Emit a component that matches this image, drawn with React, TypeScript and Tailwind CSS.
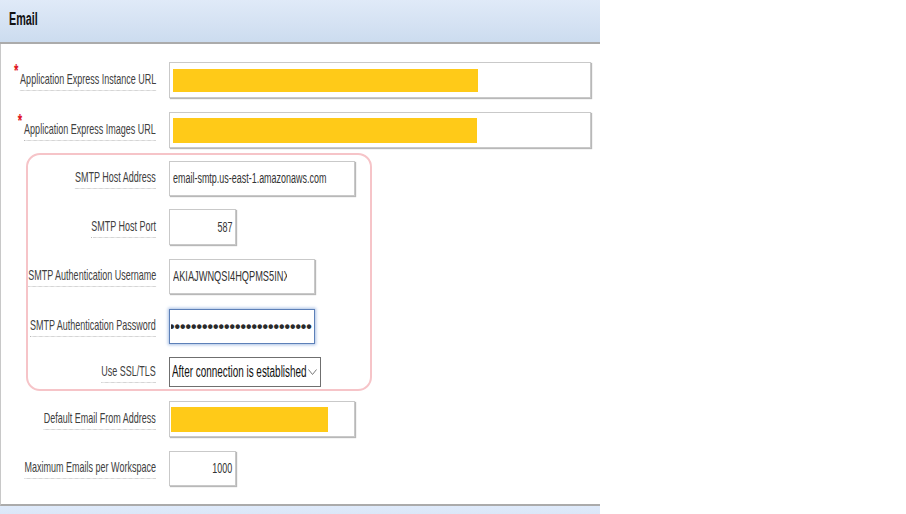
import React from "react";

const font = { fontFamily: '"Liberation Sans", Arial, sans-serif' };

function Label({ text, required }: { text: string; required?: boolean }) {
  return (
    <div className="flex justify-end shrink-0 w-full">
      <span className="inline-flex shrink-0 origin-right scale-x-[0.6] whitespace-nowrap items-start">
        {required && <span className="text-[#e0141e] text-[19px] font-bold leading-[14px] mr-[3px] -mt-[6px]">*</span>}
        <span className="text-[15px] leading-[18px] text-[#404040] border-b border-dotted border-[#b9b9b9] pb-[2px]">
          {text}
        </span>
      </span>
    </div>
  );
}

function Row({
  label,
  required,
  labelW,
  className,
  children,
}: {
  label: string;
  required?: boolean;
  labelW: string;
  className?: string;
  children: React.ReactNode;
}) {
  return (
    <div className={`flex items-center gap-[13px] ${className ?? ""}`}>
      <div className={`${labelW} shrink-0 flex`}>
        <Label text={label} required={required} />
      </div>
      {children}
    </div>
  );
}

function Box({
  w,
  h = "h-[36px]",
  focused,
  children,
}: {
  w: string;
  h?: string;
  focused?: boolean;
  children?: React.ReactNode;
}) {
  return (
    <div
      className={`${w} ${h} shrink-0 bg-white flex items-center overflow-hidden ${
        focused
          ? "border border-[#5d80b8] shadow-[0_0_3px_1px_#a9c0e4]"
          : "border border-[#c9c9c9] shadow-[1px_1px_1px_rgba(0,0,0,0.28)]"
      }`}
    >
      {children}
    </div>
  );
}

function Val({ text, right }: { text: string; right?: boolean }) {
  return (
    <div className={`flex w-full px-[3px] ${right ? "justify-end" : "justify-start"}`}>
      <span
        className={`shrink-0 whitespace-nowrap text-[14px] text-[#333] scale-x-[0.64] ${
          right ? "origin-right" : "origin-left"
        }`}
      >
        {text}
      </span>
    </div>
  );
}

export default function App() {
  return (
    <div className="w-[906px] h-[514px] overflow-hidden bg-white" style={font}>
      <div className="w-[600px]">
        <div className="h-[44px] bg-gradient-to-b from-[#e0eaf8] to-[#ccdcef] border-b-2 border-[#ababab] flex items-start pl-[9px] pt-[6px]">
          <span className="text-[18px] font-bold text-[#111] origin-left scale-x-[0.6] whitespace-nowrap">Email</span>
        </div>

        <div className="border-l border-[#c8c8c8] border-b-2 border-b-[#ababab] pt-[18px] pb-[18px] flex flex-col">
          <Row label="Application Express Instance URL" required labelW="w-[155px]">
            <Box w="w-[422px]">
              <div className="ml-[3px] w-[305px] h-[23px] bg-[#ffca18]" />
            </Box>
          </Row>
          <Row label="Application Express Images URL" required labelW="w-[155px]" className="mt-[14px]">
            <Box w="w-[422px]">
              <div className="ml-[3px] w-[304px] h-[25px] bg-[#ffca18]" />
            </Box>
          </Row>

          <div className="ml-[25px] mt-[5px] w-[346px] border-2 border-[#f6c4c8] rounded-[14px] pt-[6px] pb-[2px] flex flex-col">
            <Row label="SMTP Host Address" labelW="w-[128px]">
              <Box w="w-[186px]" h="h-[35px]">
                <Val text="email-smtp.us-east-1.amazonaws.com" />
              </Box>
            </Row>
            <Row label="SMTP Host Port" labelW="w-[128px]" className="mt-[13px]">
              <Box w="w-[67px]">
                <Val text="587" right />
              </Box>
            </Row>
            <Row label="SMTP Authentication Username" labelW="w-[128px]" className="mt-[14px]">
              <Box w="w-[146px]" h="h-[35px]">
                <div className="ml-[3px] w-[114px] overflow-hidden flex">
                  <span className="shrink-0 whitespace-nowrap text-[14px] text-[#333] scale-x-[0.66] origin-left">
                    AKIAJWNQSI4HQPMS5INX
                  </span>
                </div>
              </Box>
            </Row>
            <Row label="SMTP Authentication Password" labelW="w-[128px]" className="mt-[15px]">
              <Box w="w-[146px]" h="h-[35px]" focused>
                <div className="ml-[1px] w-[141px] overflow-hidden flex justify-end">
                  <span className="shrink-0 whitespace-nowrap text-[16px] font-bold leading-none text-[#2a2a2a] scale-x-[0.98] origin-right">
                    {"•".repeat(28)}
                  </span>
                </div>
              </Box>
            </Row>
            <Row label="Use SSL/TLS" labelW="w-[128px]" className="mt-[13px]">
              <div className="w-[152px] h-[30px] shrink-0 bg-white border border-[#6f6f6f] flex items-center pr-[3px]">
                <div className="flex-1 min-w-0 overflow-hidden flex">
                  <span className="shrink-0 whitespace-nowrap text-[16px] text-[#111] scale-x-[0.62] origin-left ml-[2px]">
                    After connection is established
                  </span>
                </div>
                <svg width="9" height="6" viewBox="0 0 9 6" className="shrink-0">
                  <path d="M0.5 0.5 L4.5 5.5 L8.5 0.5" fill="none" stroke="#7a7a7a" strokeWidth="1" />
                </svg>
              </div>
            </Row>
          </div>

          <Row label="Default Email From Address" labelW="w-[155px]" className="mt-[10px]">
            <Box w="w-[186px]">
              <div className="ml-[1px] w-[157px] h-[25px] bg-[#ffca18]" />
            </Box>
          </Row>
          <Row label="Maximum Emails per Workspace" labelW="w-[155px]" className="mt-[14px]">
            <Box w="w-[67px]" h="h-[35px]">
              <Val text="1000" right />
            </Box>
          </Row>
        </div>

        <div className="h-[40px] bg-gradient-to-b from-[#dfeafa] to-[#ccdcef]" />
      </div>
    </div>
  );
}
